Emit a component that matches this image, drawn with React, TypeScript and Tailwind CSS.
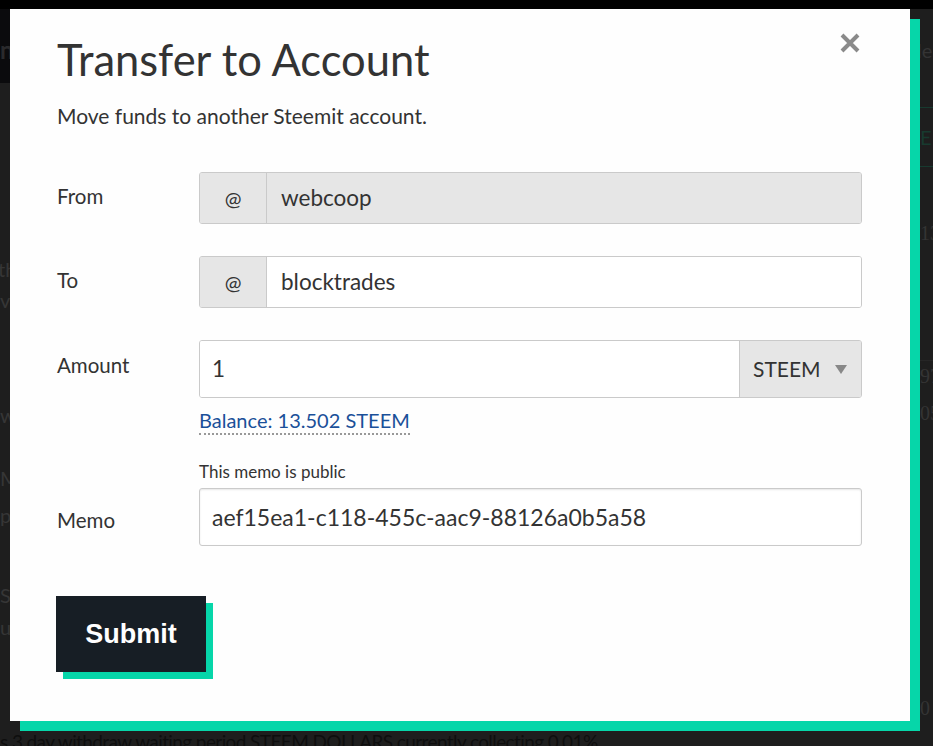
import { useState } from "react";

const sans = "font-['Lato','Noto_Sans',sans-serif]";

const Field = ({ label, children, labelClass = "" }: { label: string; children: React.ReactNode; labelClass?: string }) => (
  <div className="grid grid-cols-[142px_663px] items-center">
    <label className={`text-[20.5px] text-[#333] ${labelClass}`}>{label}</label>
    <div>{children}</div>
  </div>
);

const AtInput = ({ value, disabled = false }: { value: string; disabled?: boolean }) => (
  <div className="flex h-[52px] rounded-[3px] border border-[#cacaca] overflow-hidden shadow-[inset_0_1px_2px_rgba(10,10,10,0.1)]">
    <span className="w-[67px] flex items-center justify-center bg-[#e6e6e6] border-r border-[#cacaca] text-[20px] text-[#333]">
      @
    </span>
    <input
      readOnly
      disabled={disabled}
      value={value}
      className={`flex-1 pl-[14px] text-[22.5px] text-[#333] outline-none ${disabled ? "bg-[#e6e6e6]" : "bg-white"}`}
    />
  </div>
);

export default function App() {
  const [amount] = useState("1");
  const [memo] = useState("aef15ea1-c118-455c-aac9-88126a0b5a58");

  return (
    <div className={`relative h-[746px] w-full overflow-hidden bg-[#1e1e1e] ${sans}`}>
      {/* page behind the modal */}
      <div className="flex h-full flex-col">
        <div className="h-[9px] bg-black shrink-0" />
        <div className="flex flex-1 justify-between overflow-hidden">
          <div className="w-[40px] whitespace-nowrap text-[20px] leading-[30px] text-[#363636]">
            <div className="h-[74px] bg-[#0b0b0d] pt-[26px] text-[24px] font-bold text-[#2a2a2c]">ne</div>
            <div className="mt-[171px] ml-[-2px]">the</div>
            <div className="mt-[1px]">ve</div>
            <div className="mt-[85px]">wh</div>
            <div className="mt-[33px]">M</div>
            <div className="mt-[7px]">p</div>
            <div className="mt-[50px]">S</div>
            <div className="mt-[2px]">u</div>
          </div>
          <div className="w-[13px] whitespace-nowrap text-[20px] leading-[30px] text-[#343434]">
            <div className="mt-[26px] ml-[-3px]">le</div>
            <div className="mt-[42px] h-[60px] border-y border-[#173a2f] leading-[58px] text-[#173a2f]">E</div>
            <div className="mt-[51px] font-['Liberation_Serif',serif]">13</div>
            <div className="mt-[112px] border-t border-[#262626] font-['Liberation_Serif',serif]">97</div>
            <div className="mt-[7px] font-['Liberation_Serif',serif]">05</div>
            <div className="mt-[265px] font-['Liberation_Serif',serif]">0</div>
          </div>
        </div>
        <div className="h-[24px] mb-[-8px] shrink-0 whitespace-nowrap text-[19px] leading-[24px] tracking-[-0.6px] text-[#0e0e0e]">
          s 3 day withdraw waiting period STEEM DOLLARS currently collecting 0.01%
        </div>
      </div>

      {/* modal */}
      <div className="absolute inset-0">
        <div className="relative ml-[10px] mt-[9px] h-[712px] w-[900px] bg-[#fefefe] pl-[47px] pr-[48px] pt-[24px] shadow-[10px_10px_0_#06d6a9]">
          <button className="absolute right-[46px] top-[20px] p-1" aria-label="Close">
            <svg width="20" height="20" viewBox="0 0 20 20">
              <path d="M2 2 L18 18 M18 2 L2 18" stroke="#8a8a8a" strokeWidth="4" strokeLinecap="butt" />
            </svg>
          </button>

          <h3 className="text-[43.5px] leading-[52px] text-[#333]">Transfer to Account</h3>
          <p className="mt-[19px] text-[21px] leading-[24px] text-[#333]">Move funds to another Steemit account.</p>

          <div className="mt-[44px] flex flex-col">
            <Field label="From" labelClass="-mt-[3px]">
              <AtInput value="webcoop" disabled />
            </Field>

            <div className="mt-[32px]">
              <Field label="To" labelClass="-mt-[3px]">
                <AtInput value="blocktrades" />
              </Field>
            </div>

            <div className="mt-[32px]">
              <Field label="Amount" labelClass="-mt-[8px]">
                <div className="flex h-[58px] rounded-[3px] border border-[#cacaca] overflow-hidden shadow-[inset_0_1px_2px_rgba(10,10,10,0.1)]">
                  <input readOnly value={amount} className="flex-1 bg-white pl-[12px] text-[22.5px] text-[#333] outline-none" />
                  <div className="flex w-[122px] items-center justify-between border-l border-[#cacaca] bg-[#e6e6e6] pl-[13px] pr-[14px] text-[21px] text-[#333]">
                    STEEM
                    <svg width="12" height="9" viewBox="0 0 12 9">
                      <path d="M0 0 H12 L6 9 Z" fill="#888" />
                    </svg>
                  </div>
                </div>
              </Field>
            </div>

            <div className="grid grid-cols-[142px_663px]">
              <div />
              <div>
                <span className="mt-[10px] inline-block border-b-2 border-dotted border-[#999] pb-[1px] text-[20px] leading-[24px] text-[#1a5099]">
                  Balance: 13.502 STEEM
                </span>
              </div>
            </div>

            <div className="mt-[27px] grid grid-cols-[142px_663px]">
              <div />
              <div className="text-[17px] leading-[20px] text-[#333]">This memo is public</div>
            </div>

            <div className="mt-[6px]">
              <Field label="Memo" labelClass="mt-[6px]">
                <input
                  readOnly
                  value={memo}
                  className="h-[58px] w-full rounded-[3px] border border-[#cacaca] bg-white pl-[12px] text-[23px] text-[#333] outline-none shadow-[inset_0_1px_2px_rgba(10,10,10,0.1)]"
                />
              </Field>
            </div>

            <div className="mt-[50px]">
              <button className="ml-[-1px] h-[76px] w-[150px] bg-[#171e25] font-['Liberation_Sans',Arial,sans-serif] text-[27px] font-bold text-white shadow-[7px_7px_0_#06d6a9]">
                Submit
              </button>
            </div>
          </div>
        </div>
      </div>
    </div>
  );
}
